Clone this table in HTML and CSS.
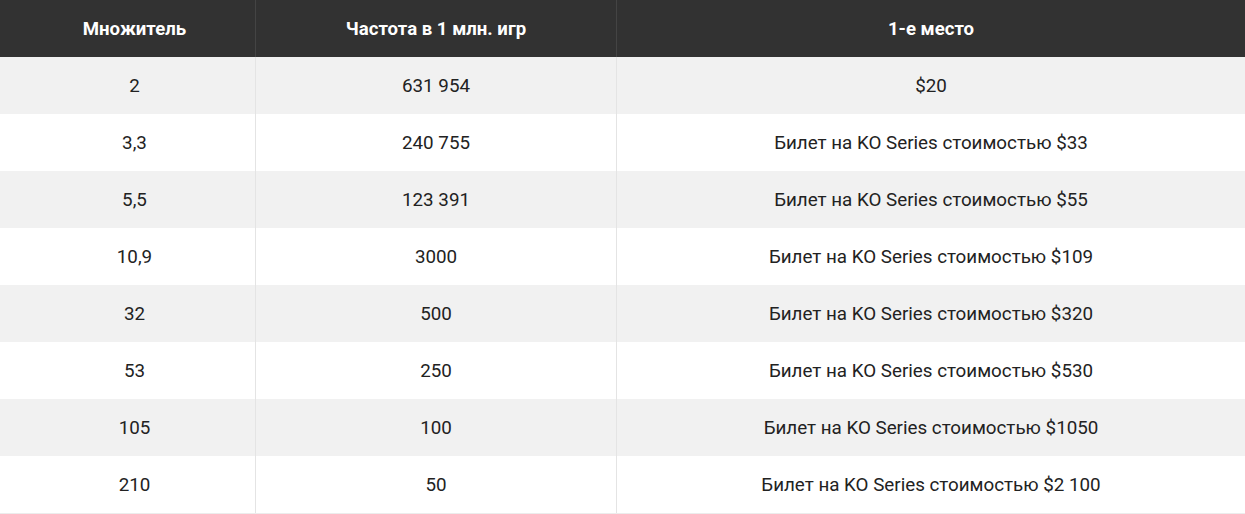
FILE: index.html
```html
<!DOCTYPE html>
<html lang="ru">
<head>
<meta charset="utf-8">
<link rel="stylesheet" href="styles.css">
</head>
<body>
<table class="odds">
  <thead>
    <tr><th class="c1">Множитель</th><th class="c2">Частота в 1 млн. игр</th><th class="c3">1-е место</th></tr>
  </thead>
  <tbody>
    <tr><td>2</td><td>631 954</td><td>$20</td></tr>
    <tr><td>3,3</td><td>240 755</td><td>Билет на KO Series стоимостью $33</td></tr>
    <tr><td>5,5</td><td>123 391</td><td>Билет на KO Series стоимостью $55</td></tr>
    <tr><td>10,9</td><td>3000</td><td>Билет на KO Series стоимостью $109</td></tr>
    <tr><td>32</td><td>500</td><td>Билет на KO Series стоимостью $320</td></tr>
    <tr><td>53</td><td>250</td><td>Билет на KO Series стоимостью $530</td></tr>
    <tr><td>105</td><td>100</td><td>Билет на KO Series стоимостью $1050</td></tr>
    <tr><td>210</td><td>50</td><td>Билет на KO Series стоимостью $2 100</td></tr>
  </tbody>
</table>
</body>
</html>
```
FILE: styles.css
```css
html, body {
  margin: 0;
  padding: 0;
  background: #ffffff;
}
.odds {
  width: 1245px;
  border-collapse: collapse;
  table-layout: fixed;
  font-family: Roboto, "Liberation Sans", sans-serif;
}
.odds th {
  height: 57px;
  padding: 0;
  background: #323232;
  color: #ffffff;
  font-size: 18.6px;
  font-weight: 700;
  text-align: center;
  border-left: 1px solid #444444;
}
.odds th:first-child { border-left: none; padding-left: 14px; }
.odds .c1 { width: 241px; }
.odds .c2 { width: 360px; }
.odds td {
  height: 57px;
  padding: 0;
  text-align: center;
  color: #222222;
  font-size: 18.8px;
  border-left: 1px solid #e4e4e4;
}
.odds td:first-child { border-left: none; padding-left: 14px; }
.odds tbody tr:nth-child(odd) td { background: #f1f1f1; }
.odds tbody tr:last-child td { border-bottom: 1px solid #ececec; }
```
